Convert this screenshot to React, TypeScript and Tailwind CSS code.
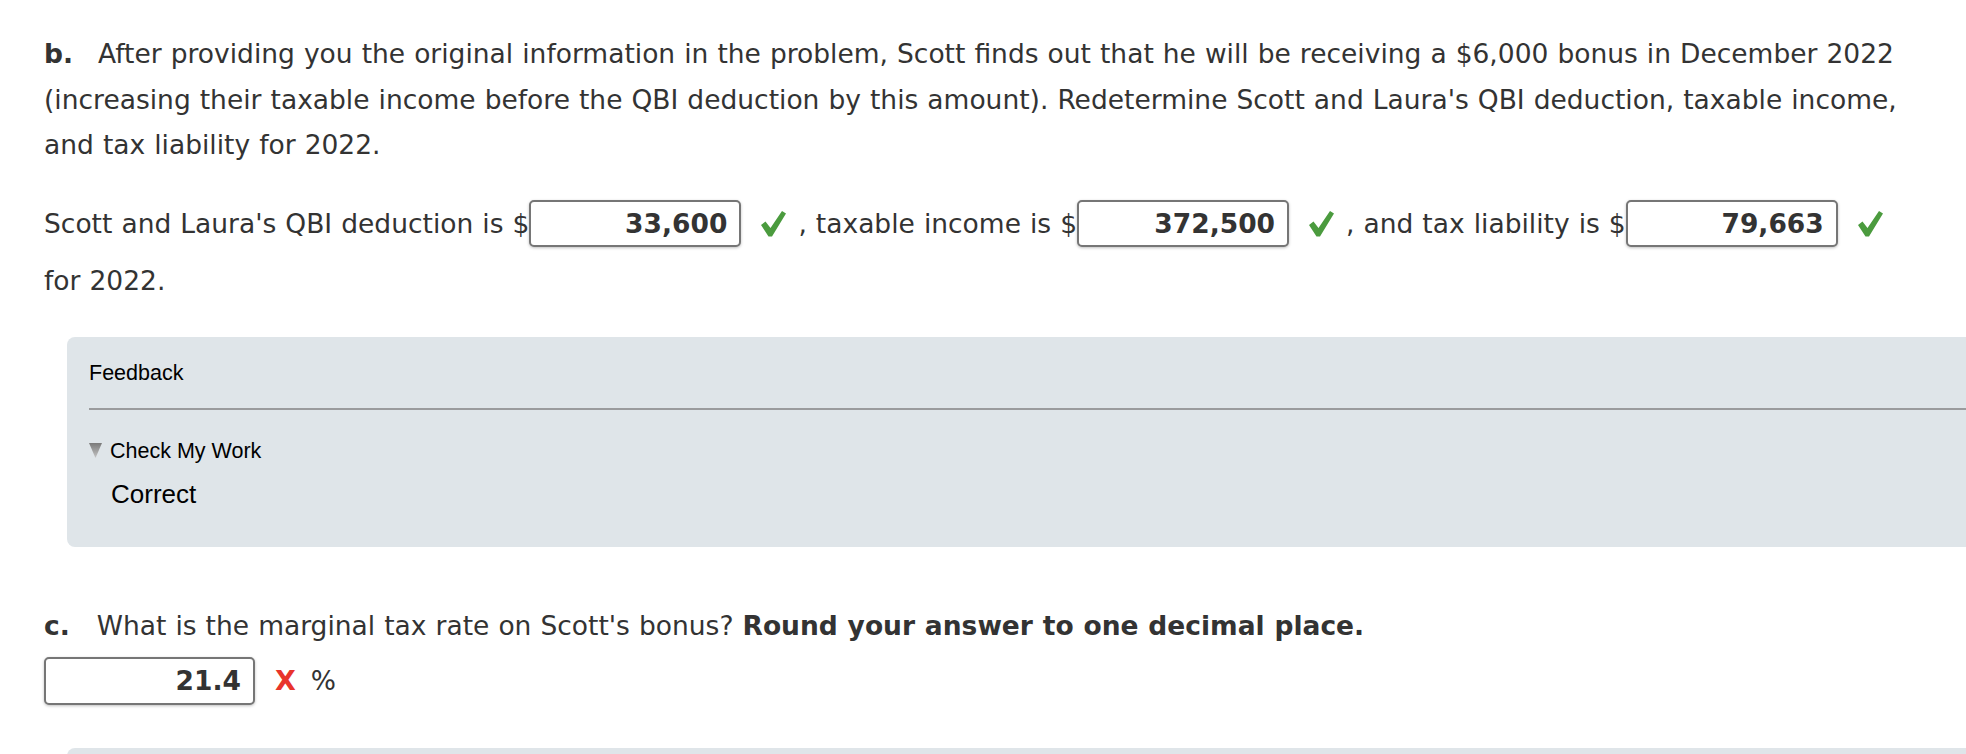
import React from "react";

// Homework answer view: part b with graded inputs + feedback panel, part c below.

function Check() {
  return (
    <svg viewBox="0 0 25 26" className="h-[26px] w-[25px] shrink-0">
      <path d="M0 14 L4.5 10.5 L9.5 17 L21 0 L25 2.5 L11 25.5 L7.5 25.5 Z" fill="#4b9b3e" />
    </svg>
  );
}

function Cross() {
  return <span className="font-bold leading-none text-[27px] text-[#e8342c]">X</span>;
}

function Answer({ value, w = "w-[212px]" }: { value: string; w?: string }) {
  return (
    <div
      className={`${w} flex h-[47px] shrink-0 items-center justify-end rounded-[5px] border-2 border-[#767676] bg-white pr-[12px] font-bold text-[#333] shadow-[0_1px_3px_rgba(0,0,0,0.25)]`}
    >
      {value}
    </div>
  );
}

export default function App() {
  return (
    <div
      className="h-[754px] w-full overflow-hidden bg-white pl-[44px] pt-[31px] text-[26.5px] text-[#333] [word-spacing:0.6px]"
      style={{ fontFamily: '"DejaVu Sans", Verdana, sans-serif' }}
    >
      <p className="max-w-[1872px] leading-[45.5px]">
        <strong className="mr-[25px]">b.</strong>
        After providing you the original information in the problem, Scott finds out that he will be
        receiving a $6,000 bonus in December 2022 (increasing their taxable income before the QBI
        deduction by this amount). Redetermine Scott and Laura's QBI deduction, taxable income, and tax
        liability for 2022.
      </p>

      <div className="mt-[32.5px] flex h-[47px] items-center whitespace-nowrap">
        <span>Scott and Laura's QBI deduction is $</span>
        <Answer value="33,600" />
        <span className="ml-[20px]">
          <Check />
        </span>
        <span className="ml-[12px]">, taxable income is $</span>
        <Answer value="372,500" />
        <span className="ml-[20px]">
          <Check />
        </span>
        <span className="ml-[12px]">, and tax liability is $</span>
        <Answer value="79,663" />
        <span className="ml-[20px]">
          <Check />
        </span>
      </div>
      <p className="mt-[11px] leading-[45.5px]">for 2022.</p>

      <div
        className="-mr-10 ml-[23px] mt-[33.5px] rounded-[8px] bg-[#dfe5e9] pb-[38px] pl-[22px] pt-[23.5px] text-black [word-spacing:0px]"
        style={{ fontFamily: '"Liberation Sans", Arial, sans-serif' }}
      >
        <div className="text-[21.5px] leading-[24px]">Feedback</div>
        <div className="mt-[23.5px] h-[2px] bg-[#9a9b9d]" />
        <div className="mt-[28.5px] flex items-center text-[21.5px] leading-[24px]">
          <svg viewBox="0 0 13 15" className="mr-[8px] h-[15px] w-[13px]">
            <defs>
              <linearGradient id="tri" x1="0" y1="0" x2="0" y2="1">
                <stop offset="0" stopColor="#7a7a7a" />
                <stop offset="1" stopColor="#c4c4c4" />
              </linearGradient>
            </defs>
            <polygon points="0,0 13,0 6.5,15" fill="url(#tri)" />
          </svg>
          Check My Work
        </div>
        <div className="ml-[22px] mt-[16.5px] text-[26px] leading-[30px]">Correct</div>
      </div>

      <p className="mt-[56px] leading-[45.5px]">
        <strong className="mr-[27px]">c.</strong>
        What is the marginal tax rate on Scott's bonus?{" "}
        <strong>Round your answer to one decimal place.</strong>
      </p>

      <div className="mt-[8px] flex h-[48px] items-center">
        <Answer value="21.4" w="w-[211px] h-[48px]" />
        <span className="ml-[20px]">
          <Cross />
        </span>
        <span className="ml-[15px]">%</span>
      </div>

      <div className="-mr-10 ml-[23px] mt-[43px] h-[40px] rounded-[8px] bg-[#dfe5e9]" />
    </div>
  );
}
